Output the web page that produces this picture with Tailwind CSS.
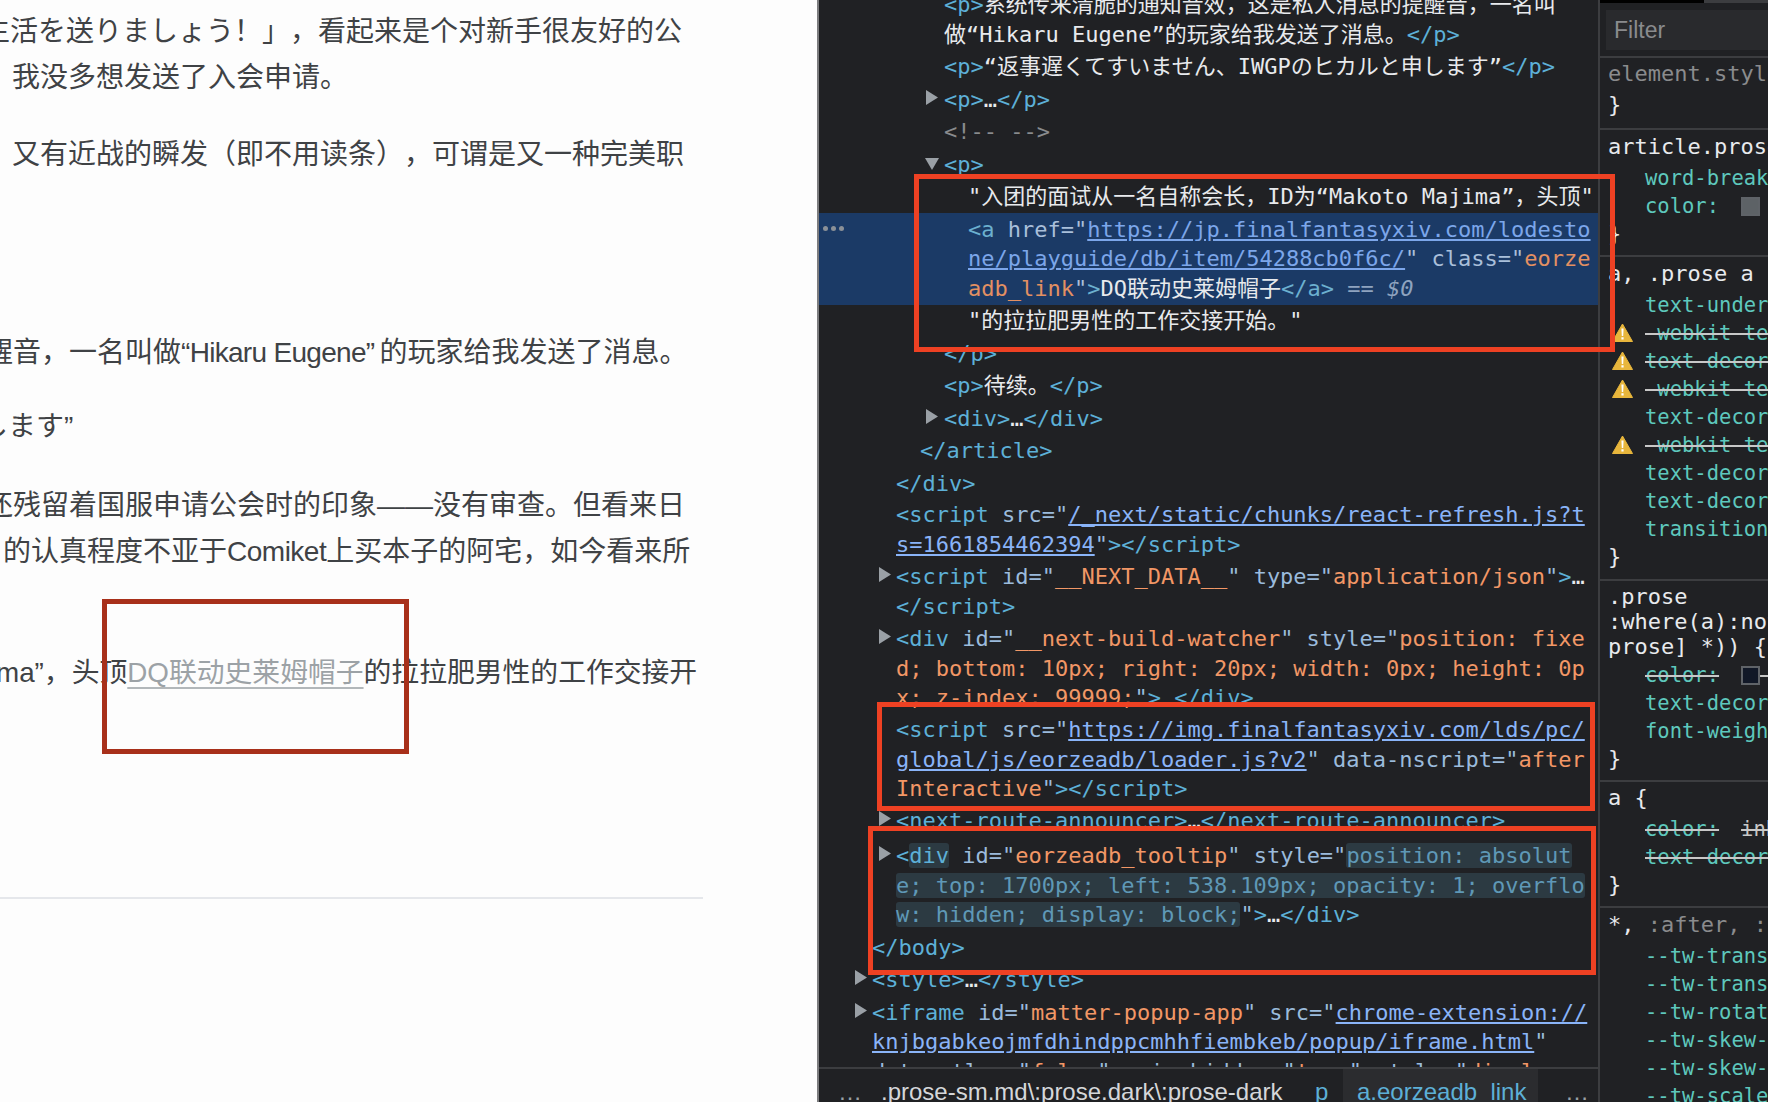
<!DOCTYPE html>
<html lang="zh-CN">
  <head>
    <meta charset="UTF-8" />
    <script src="https://cdn.jsdelivr.net/npm/@tailwindcss/browser@4"></script>
    <title>DevTools</title>
  </head>
  <body class="bg-[#fdfdfd]">
    <div class="relative flex w-[1768px] h-[1102px] overflow-hidden [text-spacing-trim:space-all]">

      <!-- article -->
      <main class="w-[819px] shrink-0 overflow-hidden bg-[#fdfdfd] border-r-2 border-[#7c7c7e] text-[28px] leading-[46px] text-[#3f4245] whitespace-nowrap font-['Liberation_Sans','Noto_Sans_CJK_SC',sans-serif]">
        <p class="mt-[9px] ml-[-18px]">生活を送りましょう！」，看起来是个对新手很友好的公</p>
        <p class="ml-[12px]">我没多想发送了入会申请。</p>
        <p class="mt-[31px] ml-[12px]">又有近战的瞬发（即不用读条），可谓是又一种完美职</p>
        <p class="mt-[152px] ml-[-15px]">醒音，一名叫做<span class="tracking-[-0.7px] mr-[5px]">“Hikaru Eugene”</span>的玩家给我发送了消息。</p>
        <p class="mt-[28px] ml-[-20px]">します”</p>
        <p class="mt-[33px] ml-[-15px]">还残留着国服申请公会时的印象——没有审查。但看来日</p>
        <p class="ml-[3px]">的认真程度不亚于<span class="tracking-[-0.5px]">Comiket</span>上买本子的阿宅，如今看来所</p>
        <p class="mt-[75px] ml-[-4px] text-[27.8px]">ma”，头顶<a class="text-[#9ca2a6] underline decoration-[#b2b7ba] underline-offset-[5px]">DQ联动史莱姆帽子</a>的拉拉肥男性的工作交接开</p>
        <div class="mt-[201px] w-[703px] h-[2px] bg-[#e5e7eb]"></div>
      </main>

      <!-- elements panel -->
      <section class="w-[781px] shrink-0 flex flex-col bg-[#202124] border-r-2 border-[#3c3d40]">
        <div class="flex-1 overflow-hidden text-[22px] leading-[29.6px] text-[#e8eaed] whitespace-nowrap font-['DejaVu_Sans_Mono','Noto_Sans_CJK_SC',monospace]">
          <div class="mt-[-10px] pl-[125px]"><span class="text-[#5db0d7]">&lt;p&gt;</span>系统传来清脆的通知音效，这是私人消息的提醒音，一名叫<br />做“Hikaru Eugene”的玩家给我发送了消息。<span class="text-[#5db0d7]">&lt;/p&gt;</span></div>
          <div class="mt-[2.9px] pl-[125px]"><span class="text-[#5db0d7]">&lt;p&gt;</span>“返事遅くてすいません、IWGPのヒカルと申します”<span class="text-[#5db0d7]">&lt;/p&gt;</span></div>
          <div class="relative mt-[2.9px] pl-[125px]">
            <svg class="absolute left-[107px] top-[5px]" width="12" height="15" viewBox="0 0 12 15"><path d="M0 0 L12 7.5 L0 15 Z" fill="#9aa0a6" /></svg>
            <span class="text-[#5db0d7]">&lt;p&gt;</span>…<span class="text-[#5db0d7]">&lt;/p&gt;</span>
          </div>
          <div class="mt-[2.9px] pl-[125px] text-[#898b8d]">&lt;!-- --&gt;</div>
          <div class="relative mt-[2.9px] pl-[125px]">
            <svg class="absolute left-[106px] top-[8px]" width="14" height="12" viewBox="0 0 14 12"><path d="M0 0 L14 0 L7 12 Z" fill="#9aa0a6" /></svg>
            <span class="text-[#5db0d7]">&lt;p&gt;</span>
          </div>
          <div class="mt-[2.9px] pl-[149px]">"入团的面试从一名自称会长，ID为“Makoto Majima”，头顶"</div>
          <div class="relative mt-[1.4px] py-[1.5px] pl-[149px] bg-[#1b3a66]">
            <div class="absolute left-[4px] top-[13px] flex gap-[3px]">
              <div class="w-[5px] h-[5px] rounded-full bg-[#8b9097]"></div>
              <div class="w-[5px] h-[5px] rounded-full bg-[#8b9097]"></div>
              <div class="w-[5px] h-[5px] rounded-full bg-[#8b9097]"></div>
            </div>
            <span class="text-[#6cb0cf]">&lt;a</span> <span class="text-[#a9bfda]">href="</span><span class="text-[#7ca6ea] underline">https://jp.finalfantasyxiv.com/lodesto<br />ne/playguide/db/item/54288cb0f6c/</span><span class="text-[#a9bfda]">" class="</span><span class="text-[#e39062]">eorze<br />adb_link</span><span class="text-[#a9bfda]">"</span><span class="text-[#6cb0cf]">&gt;</span>DQ联动史莱姆帽子<span class="text-[#6cb0cf]">&lt;/a&gt;</span> <span class="text-[#8ea3bf]">== <i>$0</i></span>
          </div>
          <div class="mt-[1.4px] pl-[149px]">"的拉拉肥男性的工作交接开始。"</div>
          <div class="mt-[2.9px] pl-[125px] text-[#5db0d7]">&lt;/p&gt;</div>
          <div class="mt-[2.9px] pl-[125px]"><span class="text-[#5db0d7]">&lt;p&gt;</span>待续。<span class="text-[#5db0d7]">&lt;/p&gt;</span></div>
          <div class="relative mt-[2.9px] pl-[125px]">
            <svg class="absolute left-[107px] top-[5px]" width="12" height="15" viewBox="0 0 12 15"><path d="M0 0 L12 7.5 L0 15 Z" fill="#9aa0a6" /></svg>
            <span class="text-[#5db0d7]">&lt;div&gt;</span>…<span class="text-[#5db0d7]">&lt;/div&gt;</span>
          </div>
          <div class="mt-[2.9px] pl-[101px] text-[#5db0d7]">&lt;/article&gt;</div>
          <div class="mt-[2.9px] pl-[77px] text-[#5db0d7]">&lt;/div&gt;</div>
          <div class="mt-[1.9px] pl-[77px]"><span class="text-[#5db0d7]">&lt;script</span> <span class="text-[#9bbbdc]">src="</span><span class="text-[#8ab4f8] underline">/_next/static/chunks/react-refresh.js?t<br />s=1661854462394</span><span class="text-[#9bbbdc]">"</span><span class="text-[#5db0d7]">&gt;&lt;/script&gt;</span></div>
          <div class="relative mt-[2.9px] pl-[77px]">
            <svg class="absolute left-[60px] top-[5px]" width="12" height="15" viewBox="0 0 12 15"><path d="M0 0 L12 7.5 L0 15 Z" fill="#9aa0a6" /></svg>
            <span class="text-[#5db0d7]">&lt;script</span> <span class="text-[#9bbbdc]">id="</span><span class="text-[#f29766]">__NEXT_DATA__</span><span class="text-[#9bbbdc]">" type="</span><span class="text-[#f29766]">application/json</span><span class="text-[#9bbbdc]">"</span><span class="text-[#5db0d7]">&gt;</span>…<br /><span class="text-[#5db0d7]">&lt;/script&gt;</span>
          </div>
          <div class="relative mt-[2.9px] pl-[77px]">
            <svg class="absolute left-[60px] top-[5px]" width="12" height="15" viewBox="0 0 12 15"><path d="M0 0 L12 7.5 L0 15 Z" fill="#9aa0a6" /></svg>
            <span class="text-[#5db0d7]">&lt;div</span> <span class="text-[#9bbbdc]">id="</span><span class="text-[#f29766]">__next-build-watcher</span><span class="text-[#9bbbdc]">" style="</span><span class="text-[#f29766]">position: fixe<br />d; bottom: 10px; right: 20px; width: 0px; height: 0p<br />x; z-index: 99999;</span><span class="text-[#9bbbdc]">"</span><span class="text-[#5db0d7]">&gt;</span> <span class="text-[#5db0d7]">&lt;/div&gt;</span>
          </div>
          <div class="mt-[1.9px] pl-[77px]"><span class="text-[#5db0d7]">&lt;script</span> <span class="text-[#9bbbdc]">src="</span><span class="text-[#8ab4f8] underline">https://img.finalfantasyxiv.com/lds/pc/<br />global/js/eorzeadb/loader.js?v2</span><span class="text-[#9bbbdc]">" data-nscript="</span><span class="text-[#f29766]">after<br />Interactive</span><span class="text-[#9bbbdc]">"</span><span class="text-[#5db0d7]">&gt;&lt;/script&gt;</span></div>
          <div class="relative mt-[1.9px] pl-[77px]">
            <svg class="absolute left-[60px] top-[5px]" width="12" height="15" viewBox="0 0 12 15"><path d="M0 0 L12 7.5 L0 15 Z" fill="#9aa0a6" /></svg>
            <span class="text-[#5db0d7]">&lt;next-route-announcer&gt;</span>…<span class="text-[#5db0d7]">&lt;/next-route-announcer&gt;</span>
          </div>
          <div class="relative mt-[5.9px] pl-[77px]">
            <svg class="absolute left-[60px] top-[5px]" width="12" height="15" viewBox="0 0 12 15"><path d="M0 0 L12 7.5 L0 15 Z" fill="#9aa0a6" /></svg>
            <span class="text-[#5db0d7]">&lt;<span class="bg-[#2c3a42] rounded-[3px]">div</span></span> <span class="text-[#9bbbdc]">id="</span><span class="text-[#f29766]">eorzeadb_tooltip</span><span class="text-[#9bbbdc]">" style="</span><span class="text-[#5f98b6] bg-[#2c3a42] rounded-[3px] box-decoration-clone">position: absolut<br />e; top: 1700px; left: 538.109px; opacity: 1; overflo<br />w: hidden; display: block;</span><span class="text-[#9bbbdc]">"</span><span class="text-[#5db0d7]">&gt;</span>…<span class="text-[#5db0d7]">&lt;/div&gt;</span>
          </div>
          <div class="mt-[2.9px] pl-[53px] text-[#5db0d7]">&lt;/body&gt;</div>
          <div class="relative mt-[2.9px] pl-[53px]">
            <svg class="absolute left-[36px] top-[5px]" width="12" height="15" viewBox="0 0 12 15"><path d="M0 0 L12 7.5 L0 15 Z" fill="#9aa0a6" /></svg>
            <span class="text-[#5db0d7]">&lt;style&gt;</span>…<span class="text-[#5db0d7]">&lt;/style&gt;</span>
          </div>
          <div class="relative mt-[2.9px] pl-[53px]">
            <svg class="absolute left-[36px] top-[5px]" width="12" height="15" viewBox="0 0 12 15"><path d="M0 0 L12 7.5 L0 15 Z" fill="#9aa0a6" /></svg>
            <span class="text-[#5db0d7]">&lt;iframe</span> <span class="text-[#9bbbdc]">id="</span><span class="text-[#f29766]">matter-popup-app</span><span class="text-[#9bbbdc]">" src="</span><span class="text-[#8ab4f8] underline">chrome-extension://<br />knjbgabkeojmfdhindppcmhhfiembkeb/popup/iframe.html</span><span class="text-[#9bbbdc]">"<br />data-atlas="</span><span class="text-[#f29766]">false</span><span class="text-[#9bbbdc]">" aria-hidden="</span><span class="text-[#f29766]">true</span><span class="text-[#9bbbdc]">" style="</span><span class="text-[#f29766]">display:</span>
          </div>
        </div>
        <!-- breadcrumbs -->
        <div class="h-[35px] shrink-0 flex border-t-2 border-[#3c3d40] bg-[#202124] text-[24px] whitespace-nowrap font-['Liberation_Sans','Noto_Sans_CJK_SC',sans-serif]">
          <span class="w-[62px] pl-[19px] pt-[5px] text-[#9aa0a6]">…</span>
          <span class="w-[406px] pt-[5px] text-[#d5d7da]">.prose-sm.md\:prose.dark\:prose-dark</span>
          <span class="ml-[28px] w-[13px] pt-[5px] text-[#5db0d7]">p</span>
          <span class="ml-[15px] w-[195px] pl-[14px] pt-[5px] bg-[#2b2c2f] text-[#5db0d7]">a.eorzeadb_link</span>
          <span class="ml-[27px] pt-[5px] text-[#9aa0a6]">…</span>
        </div>
      </section>

      <!-- styles panel -->
      <aside class="flex-1 overflow-hidden bg-[#202124] text-[22px] leading-[28px] text-[#e8eaed] whitespace-nowrap font-['DejaVu_Sans_Mono','Noto_Sans_CJK_SC',monospace]">
        <div class="h-[58px] border-b-2 border-[#3c3d40]">
          <div class="flex h-[3px] bg-[#3c3d40]"><div class="w-[104px] bg-black"></div></div>
          <div class="mt-[7px] ml-[6px] h-[40px] pl-[8px] bg-[#292a2d] flex items-center text-[23px] text-[#8a8b8d] font-['Liberation_Sans',sans-serif]">Filter</div>
        </div>
        <div class="pt-[2px] pb-[9px] pl-[8px] border-b-2 border-[#3c3d40]">
          <div class="mb-[3px] text-[#8a8b8d]">element.style {</div>
          <div>}</div>
        </div>
        <div class="pt-[3px] pb-[7px] pl-[8px] border-b-2 border-[#3c3d40]">
          <div class="mb-[3px]">article.prose {</div>
          <div class="pl-[37px] text-[20.5px] text-[#5ec8bd]">word-break: break-word;</div>
          <div class="pl-[37px] text-[20.5px] text-[#5ec8bd]">color:<span class="inline-block align-[-3px] w-[19px] h-[19px] ml-[22px] border-2 border-[#5f6368] bg-[#5d6266]"></span> #374151;</div>
          <div>}</div>
        </div>
        <div class="pt-[3px] pb-[8px] pl-[8px] border-b-2 border-[#3c3d40]">
          <div class="mb-[3px]">a, .prose a {</div>
          <div class="pl-[37px] text-[20.5px] text-[#5ec8bd]">text-underline-offset: 4px;</div>
          <div class="relative pl-[37px] text-[20.5px] text-[#5ec8bd] line-through decoration-[#c8c8c8]">
            <svg class="absolute left-[4px] top-[4px]" width="21" height="19" viewBox="0 0 21 19"><path d="M10.5 1 L20.5 18.5 L0.5 18.5 Z" fill="#e8b63c" stroke="#e8b63c" stroke-linejoin="round" /><path d="M9.4 5.5 h2.2 l-.4 7.5 h-1.4 Z M9.4 14.2 h2.2 v2.2 h-2.2 Z" fill="#fff" /></svg>
            -webkit-text-decoration-line: underline;
          </div>
          <div class="relative pl-[37px] text-[20.5px] text-[#5ec8bd] line-through decoration-[#c8c8c8]">
            <svg class="absolute left-[4px] top-[4px]" width="21" height="19" viewBox="0 0 21 19"><path d="M10.5 1 L20.5 18.5 L0.5 18.5 Z" fill="#e8b63c" stroke="#e8b63c" stroke-linejoin="round" /><path d="M9.4 5.5 h2.2 l-.4 7.5 h-1.4 Z M9.4 14.2 h2.2 v2.2 h-2.2 Z" fill="#fff" /></svg>
            text-decoration-line: underline;
          </div>
          <div class="relative pl-[37px] text-[20.5px] text-[#5ec8bd] line-through decoration-[#c8c8c8]">
            <svg class="absolute left-[4px] top-[4px]" width="21" height="19" viewBox="0 0 21 19"><path d="M10.5 1 L20.5 18.5 L0.5 18.5 Z" fill="#e8b63c" stroke="#e8b63c" stroke-linejoin="round" /><path d="M9.4 5.5 h2.2 l-.4 7.5 h-1.4 Z M9.4 14.2 h2.2 v2.2 h-2.2 Z" fill="#fff" /></svg>
            -webkit-text-decoration-color: #9ca3af;
          </div>
          <div class="pl-[37px] text-[20.5px] text-[#5ec8bd]">text-decoration-color: #9ca3af;</div>
          <div class="relative pl-[37px] text-[20.5px] text-[#5ec8bd] line-through decoration-[#c8c8c8]">
            <svg class="absolute left-[4px] top-[4px]" width="21" height="19" viewBox="0 0 21 19"><path d="M10.5 1 L20.5 18.5 L0.5 18.5 Z" fill="#e8b63c" stroke="#e8b63c" stroke-linejoin="round" /><path d="M9.4 5.5 h2.2 l-.4 7.5 h-1.4 Z M9.4 14.2 h2.2 v2.2 h-2.2 Z" fill="#fff" /></svg>
            -webkit-text-decoration-style: solid;
          </div>
          <div class="pl-[37px] text-[20.5px] text-[#5ec8bd]">text-decoration-style: solid;</div>
          <div class="pl-[37px] text-[20.5px] text-[#5ec8bd]">text-decoration-thickness: 1px;</div>
          <div class="pl-[37px] text-[20.5px] text-[#5ec8bd]">transition: color .2s;</div>
          <div>}</div>
        </div>
        <div class="pt-[3px] pb-[7px] pl-[8px] border-b-2 border-[#3c3d40]">
          <div class="leading-[25px] mb-[2px]">.prose<br />:where(a):not(:where([class~=not-<br />prose] *)) {</div>
          <div class="pl-[37px] text-[20.5px] text-[#5ec8bd] line-through decoration-[#c8c8c8]">color:<span class="inline-block align-[-3px] w-[19px] h-[19px] ml-[22px] border-2 border-[#5f6368] bg-[#111827]"></span> #111827;</div>
          <div class="pl-[37px] text-[20.5px] text-[#5ec8bd]">text-decoration: underline;</div>
          <div class="pl-[37px] text-[20.5px] text-[#5ec8bd]">font-weight: 500;</div>
          <div>}</div>
        </div>
        <div class="pt-[2px] pb-[7px] pl-[8px] border-b-2 border-[#3c3d40]">
          <div class="mb-[3px]">a {</div>
          <div class="pl-[37px] text-[20.5px] text-[#5ec8bd] line-through decoration-[#c8c8c8]">color:<span class="ml-[22px] text-[#c8c8c8]">inherit;</span></div>
          <div class="pl-[37px] text-[20.5px] text-[#5ec8bd] line-through decoration-[#c8c8c8]">text-decoration: inherit;</div>
          <div>}</div>
        </div>
        <div class="pt-[3px] pl-[8px]">
          <div class="mb-[3px]">*, <span class="text-[#8a8b8d]">:after, :before</span> {</div>
          <div class="pl-[37px] text-[20.5px] text-[#5ec8bd]">--tw-translate-x: 0;</div>
          <div class="pl-[37px] text-[20.5px] text-[#5ec8bd]">--tw-translate-y: 0;</div>
          <div class="pl-[37px] text-[20.5px] text-[#5ec8bd]">--tw-rotate: 0;</div>
          <div class="pl-[37px] text-[20.5px] text-[#5ec8bd]">--tw-skew-x: 0;</div>
          <div class="pl-[37px] text-[20.5px] text-[#5ec8bd]">--tw-skew-y: 0;</div>
          <div class="pl-[37px] text-[20.5px] text-[#5ec8bd]">--tw-scale-x: 1;</div>
        </div>
      </aside>

      <!-- red annotation boxes -->
      <div class="absolute left-[102px] top-[599px] w-[307px] h-[155px] border-[5px] border-[#a8301a]"></div>
      <div class="absolute left-[914px] top-[174px] w-[701px] h-[178px] border-[5px] border-[#ee4123]"></div>
      <div class="absolute left-[877px] top-[702px] w-[718px] h-[109px] border-[5px] border-[#ee4123]"></div>
      <div class="absolute left-[868px] top-[826px] w-[728px] h-[149px] border-[5px] border-[#ee4123]"></div>
    </div>
  </body>
</html>
